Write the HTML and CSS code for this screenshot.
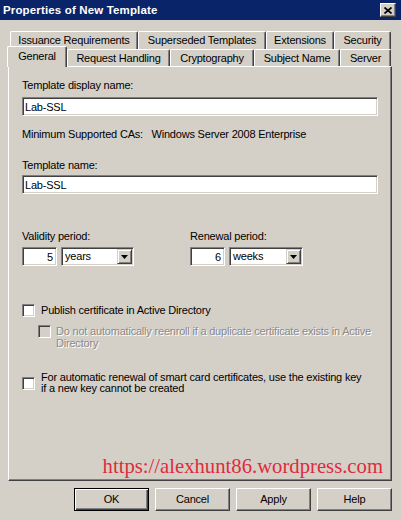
FILE: index.html
```html
<!DOCTYPE html>
<html>
<head>
<meta charset="utf-8">
<title>Properties of New Template</title>
<link rel="stylesheet" href="styles.css">
</head>
<body>
<div class="titlebar">
  <span class="title">Properties of New Template</span>
  <span class="close"><svg width="8" height="7" viewBox="0 0 8 7"><path d="M0.5 0.5 L7.5 6.5 M7.5 0.5 L0.5 6.5" stroke="#000" stroke-width="1.7" fill="none"/></svg></span>
</div>
<div class="tabs">
  <div class="tabrow back">
    <div class="tab t-iss">Issuance Requirements</div>
    <div class="tab t-sup">Superseded Templates</div>
    <div class="tab t-ext">Extensions</div>
    <div class="tab t-sec">Security</div>
  </div>
  <div class="tabrow front">
    <div class="tab t-gen active">General</div>
    <div class="tab t-req">Request Handling</div>
    <div class="tab t-cry">Cryptography</div>
    <div class="tab t-sub">Subject Name</div>
    <div class="tab t-srv">Server</div>
  </div>
</div>
<div class="panel">
  <div class="label l-display">Template display name:</div>
  <div class="edit e-display">Lab-SSL</div>
  <div class="label l-min">Minimum Supported CAs:&nbsp;&nbsp; Windows Server 2008 Enterprise</div>
  <div class="label l-name">Template name:</div>
  <div class="edit e-name">Lab-SSL</div>
  <div class="periods">
    <div class="period">
      <div class="label">Validity period:</div>
      <div class="pcontrols">
        <div class="edit num">5</div>
        <div class="combo c-years"><span>years</span><span class="drop"><svg width="7" height="4" viewBox="0 0 7 4"><polygon points="0,0 7,0 3.5,4" fill="#000"/></svg></span></div>
      </div>
    </div>
    <div class="period">
      <div class="label">Renewal period:</div>
      <div class="pcontrols">
        <div class="edit num">6</div>
        <div class="combo c-weeks"><span>weeks</span><span class="drop"><svg width="7" height="4" viewBox="0 0 7 4"><polygon points="0,0 7,0 3.5,4" fill="#000"/></svg></span></div>
      </div>
    </div>
  </div>
  <div class="check ch-publish">
    <span class="box"></span>
    <span class="ctext">Publish certificate in Active Directory</span>
  </div>
  <div class="check ch-reenroll">
    <span class="box disabled"></span>
    <span class="ctext disabled-text">Do not automatically reenroll if a duplicate certificate exists in Active<br>Directory</span>
  </div>
  <div class="check ch-renew">
    <span class="box"></span>
    <span class="ctext multi">For automatic renewal of smart card certificates, use the existing key<br>if a new key cannot be created</span>
  </div>
  <div class="watermark">https://alexhunt86.wordpress.com</div>
</div>
<div class="buttons">
  <div class="btn default">OK</div>
  <div class="btn">Cancel</div>
  <div class="btn">Apply</div>
  <div class="btn">Help</div>
</div>
</body>
</html>
```
FILE: styles.css
```css
* { box-sizing: border-box; }
html, body { margin: 0; padding: 0; }
body {
  width: 401px;
  height: 520px;
  overflow: hidden;
  background: #d4d0c8;
  font-family: "Liberation Sans", Arial, sans-serif;
  font-size: 11px;
  line-height: 13px;
  letter-spacing: -0.2px;
  color: #000;
}

/* title bar */
.titlebar {
  height: 20px;
  background: #0a246a;
  display: flex;
  align-items: center;
  justify-content: space-between;
  padding: 0 5px 0 3px;
}
.title {
  color: #fff;
  font-weight: bold;
  font-size: 11.5px;
  letter-spacing: 0.15px;
}
.close {
  width: 16px;
  height: 14px;
  background: #d4d0c8;
  border: 1px solid;
  border-color: #fff #404040 #404040 #fff;
  box-shadow: inset -1px -1px 0 #808080;
  display: flex;
  align-items: center;
  justify-content: center;
}

/* tabs */
.tabs { margin-top: 11px; }
.tabrow { display: flex; align-items: flex-start; }
.tabrow.back { height: 18px; padding-left: 10px; }
.tabrow.front { height: 17px; padding-left: 7px; }
.tab {
  height: 18px;
  background: #d4d0c8;
  border-top: 1px solid #fff;
  border-left: 1px solid #fff;
  border-right: 1px solid #404040;
  box-shadow: inset -1px 0 0 #808080;
  border-radius: 2px 2px 0 0;
  display: flex;
  align-items: center;
  justify-content: center;
  white-space: nowrap;
}
.front .tab { height: 17px; }
.front .tab.active {
  height: 21px;
  margin-top: -3px;
  position: relative;
  z-index: 2;
  padding-bottom: 2px;
}
.t-iss { width: 128px; }
.t-sup { width: 128px; }
.t-ext { width: 68px; }
.t-sec { width: 57px; }
.t-gen { width: 60px; }
.t-req { width: 103px; }
.t-cry { width: 84px; }
.t-sub { width: 86px; }
.t-srv { width: 51px; }

/* panel */
.panel {
  margin-left: 8px;
  width: 384px;
  height: 415px;
  border-top: 1px solid #fff;
  border-left: 1px solid #fff;
  border-right: 1px solid #404040;
  border-bottom: 1px solid #404040;
  box-shadow: inset -1px -1px 0 #808080;
  padding: 12px 13px 0 13px;
  display: flex;
  flex-direction: column;
}
.label { height: 13px; white-space: nowrap; }
.edit {
  height: 19px;
  background: #fff;
  border: 1px solid;
  border-color: #808080 #fff #fff #808080;
  box-shadow: inset 1px 1px 0 #404040, inset -1px -1px 0 #d4d0c8;
  padding: 2px 2px 0 2px;
  line-height: 14px;
}
.e-display { margin-top: 5px; }
.l-min { margin-top: 12px; }
.l-name { margin-top: 18px; }
.e-name { margin-top: 3px; }

.periods {
  margin-top: 36px;
  display: grid;
  grid-template-columns: 168px 1fr;
}
.pcontrols {
  margin-top: 4px;
  display: flex;
  gap: 4px;
}
.num {
  width: 35px;
  text-align: right;
  padding-right: 3px;
}
.combo {
  height: 19px;
  background: #fff;
  border: 1px solid;
  border-color: #808080 #fff #fff #808080;
  box-shadow: inset 1px 1px 0 #404040, inset -1px -1px 0 #d4d0c8;
  display: flex;
  align-items: center;
  justify-content: space-between;
  padding: 0 1px 0 3px;
}
.c-years { width: 73px; }
.c-weeks { width: 74px; }
.drop {
  width: 15px;
  height: 15px;
  background: #d4d0c8;
  border: 1px solid;
  border-color: #d4d0c8 #404040 #404040 #d4d0c8;
  box-shadow: inset 1px 1px 0 #fff, inset -1px -1px 0 #808080;
  display: flex;
  align-items: center;
  justify-content: center;
}

/* checkboxes */
.check { display: flex; align-items: flex-start; }
.box {
  flex: none;
  width: 13px;
  height: 13px;
  background: #fff;
  border: 1px solid;
  border-color: #808080 #fff #fff #808080;
  box-shadow: inset 1px 1px 0 #404040, inset -1px -1px 0 #d4d0c8;
}
.box.disabled { background: #d4d0c8; }
.ch-publish { margin-top: 38px; gap: 6px; }
.ch-reenroll { margin-top: 8px; margin-left: 16px; gap: 5px; }
.ch-renew { margin-top: 23px; gap: 6px; align-items: center; }
.ctext { white-space: nowrap; }
.disabled-text {
  color: #8a8a8a;
  text-shadow: 1px 1px 0 #fff;
  line-height: 12px;
}
.multi { line-height: 11px; }

.watermark {
  margin-top: auto;
  margin-bottom: 3px;
  margin-right: -5px;
  align-self: flex-end;
  font-family: "Liberation Serif", "Times New Roman", serif;
  font-size: 20.7px;
  line-height: 21px;
  letter-spacing: 0;
  color: #e02b3b;
  white-space: nowrap;
}

/* buttons */
.buttons {
  width: 392px;
  margin-top: 7px;
  display: flex;
  justify-content: flex-end;
  gap: 6px;
}
.btn {
  width: 75px;
  height: 23px;
  border: 1px solid;
  border-color: #fff #404040 #404040 #fff;
  box-shadow: inset -1px -1px 0 #808080;
  display: flex;
  align-items: center;
  justify-content: center;
  padding-bottom: 1px;
}
.btn.default {
  border-color: #000;
  box-shadow: inset 1px 1px 0 #fff, inset -1px -1px 0 #404040, inset -2px -2px 0 #808080;
}
```
